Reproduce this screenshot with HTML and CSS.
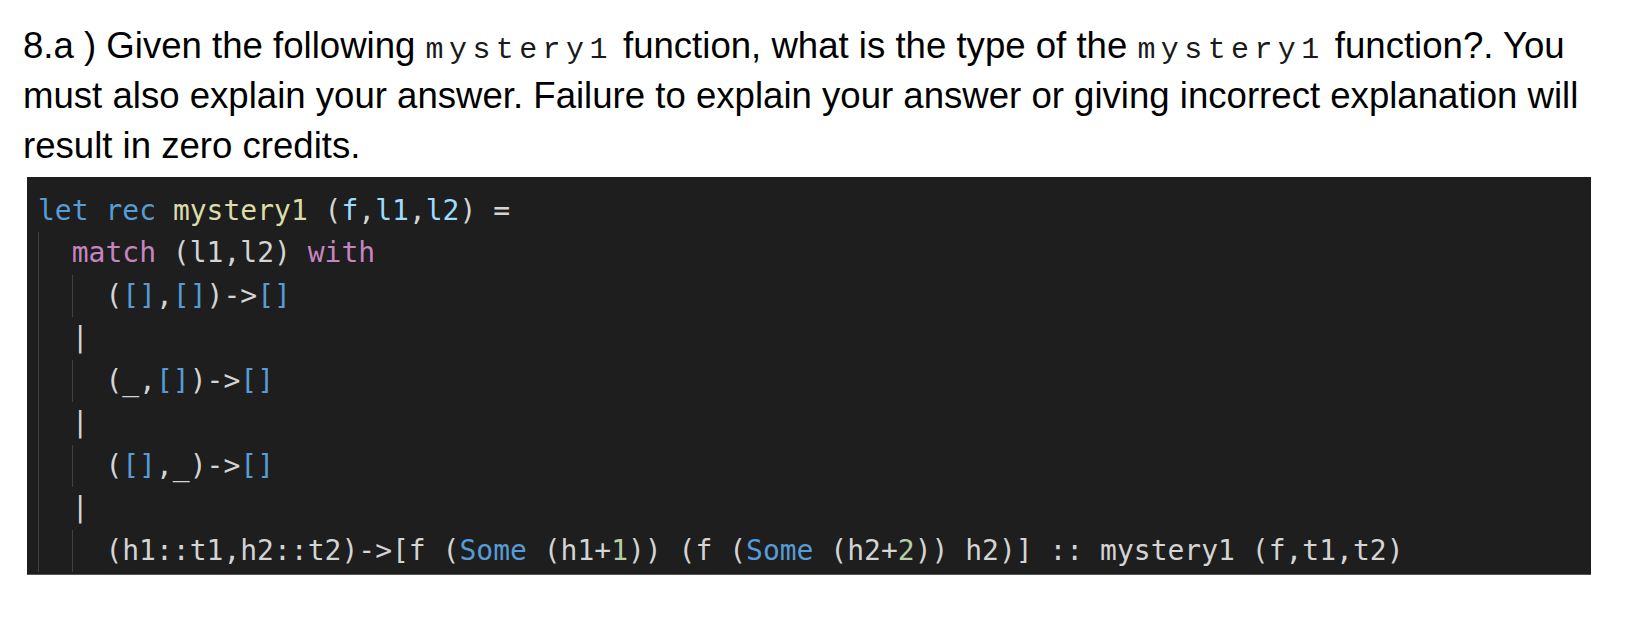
FILE: index.html
```html
<!DOCTYPE html>
<html lang="en">
<head>
<meta charset="utf-8">
<title>Question 8.a</title>
<link rel="stylesheet" href="styles.css">
</head>
<body>
<main class="page">
  <p class="question">8.a ) Given the following <code class="inline">mystery1</code> function, what is the type of the <code class="inline">mystery1</code> function?. You<br>must also explain your answer. Failure to explain your answer or giving incorrect explanation will<br>result in zero credits.</p>
  <pre class="code"><div class="ln"><span class="tx"><span class="kw">let</span> <span class="kw">rec</span> <span class="fn">mystery1</span> (<span class="pa">f</span>,<span class="pa">l1</span>,<span class="pa">l2</span>) =</span></div><div class="ln"><span class="ig"></span><span class="tx"><span class="ctl">match</span> (l1,l2) <span class="ctl">with</span></span></div><div class="ln"><span class="ig"></span><span class="ig"></span><span class="tx">(<span class="kw">[]</span>,<span class="kw">[]</span>)-&gt;<span class="kw">[]</span></span></div><div class="ln"><span class="ig"></span><span class="tx">|</span></div><div class="ln"><span class="ig"></span><span class="ig"></span><span class="tx">(_,<span class="kw">[]</span>)-&gt;<span class="kw">[]</span></span></div><div class="ln"><span class="ig"></span><span class="tx">|</span></div><div class="ln"><span class="ig"></span><span class="ig"></span><span class="tx">(<span class="kw">[]</span>,_)-&gt;<span class="kw">[]</span></span></div><div class="ln"><span class="ig"></span><span class="tx">|</span></div><div class="ln"><span class="ig"></span><span class="ig"></span><span class="tx">(h1::t1,h2::t2)-&gt;[f (<span class="kw">Some</span> (h1+<span class="num">1</span>)) (f (<span class="kw">Some</span> (h2+<span class="num">2</span>)) h2)] :: mystery1 (f,t1,t2)</span></div></pre>
</main>
</body>
</html>
```

FILE: styles.css
```css
html, body {
  margin: 0;
  padding: 0;
  background: #ffffff;
}

.page {
  padding: 21px 0 0 0;
}

.question {
  margin: 0;
  padding-left: 23px;
  font-family: "Liberation Sans", Arial, sans-serif;
  font-size: 36.6px;
  line-height: 50px;
  color: #000000;
}

.inline {
  font-family: "Liberation Mono", "Courier New", monospace;
  font-size: 30px;
  line-height: 1;
  letter-spacing: 5.4px;
  color: #1a1a1a;
}

.code {
  margin: 6px 0 0 27px;
  width: 1553px;
  padding: 12.5px 0 1.5px 11px;
  background: #1e1e1e;
  border-bottom: 1px solid #555555;
  font-family: "DejaVu Sans Mono", monospace;
  font-size: 28px;
  line-height: 42.5px;
  color: #d4d4d4;
  white-space: pre;
}

.ln {
  display: flex;
  height: 42.5px;
}

.ig {
  flex: none;
  width: 2ch;
  box-shadow: inset 1px 0 0 #424242;
}

.tx {
  flex: none;
}

.kw { color: #569cd6; }
.fn { color: #dcdcaa; }
.pa { color: #9cdcfe; }
.ctl { color: #c586c0; }
.num { color: #b5cea8; }
```
